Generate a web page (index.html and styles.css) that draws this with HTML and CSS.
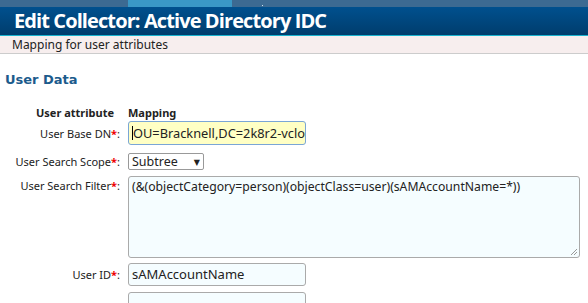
FILE: index.html
```html
<!DOCTYPE html>
<html>
<head>
<meta charset="utf-8">
<link rel="stylesheet" href="styles.css">
</head>
<body>
<div class="topstrip"><div class="tab"></div><div class="dot"></div></div>
<div class="titlebar"><h1>Edit Collector: Active Directory IDC</h1></div>
<div class="subbar">Mapping for user attributes</div>
<h2 class="section">User Data</h2>
<div class="form">
  <div class="row head">
    <div class="label">User attribute</div>
    <div class="field">Mapping</div>
  </div>
  <div class="row mid r1">
    <div class="label">User Base DN<span class="req">*</span>:</div>
    <div class="field"><div class="input focus"><span class="caret"></span>OU=Bracknell,DC=2k8r2-vcloud,DC=local</div></div>
  </div>
  <div class="row mid r2">
    <div class="label">User Search Scope<span class="req">*</span>:</div>
    <div class="field"><div class="select">Subtree<span class="arrow">▼</span></div></div>
  </div>
  <div class="row top r3">
    <div class="label lt">User Search Filter<span class="req">*</span>:</div>
    <div class="field"><div class="textarea">(&amp;(objectCategory=person)(objectClass=user)(sAMAccountName=*))<svg class="grip" width="8" height="8" viewBox="0 0 8 8"><path d="M7 1L1 7M7 4L4 7" stroke="#999" stroke-width="1"/></svg></div></div>
  </div>
  <div class="row mid">
    <div class="label">User ID<span class="req">*</span>:</div>
    <div class="field"><div class="input">sAMAccountName</div></div>
  </div>
  <div class="row mid">
    <div class="label"></div>
    <div class="field"><div class="input"></div></div>
  </div>
</div>
</body>
</html>
```
FILE: styles.css
```css
html, body { margin: 0; padding: 0; background: #fff; overflow: hidden; }
body { width: 588px; height: 303px; font-family: "Noto Sans", "DejaVu Sans", sans-serif; color: #222; }
.topstrip { height: 7px; background: #3c6a92; position: relative; }
.topstrip .tab { position: absolute; left: 128px; top: 0; width: 104px; height: 7px; background: #3a98c6; }
.topstrip .dot { position: absolute; left: 262px; top: 5px; width: 1px; height: 1px; background: #cfe3ee; }
.titlebar { height: 28px; background: linear-gradient(#00508e, #003d6d); border-bottom: 1px solid #19b3cf; display: flex; align-items: center; }
.titlebar h1 { margin: 0 0 0 14px; font-family: "Open Sans", sans-serif; font-weight: 700; font-size: 20px; color: #fff; letter-spacing: -0.9px; line-height: 28px; }
.subbar { height: 17px; background: #f7eeee; border-bottom: 1px solid #cccccc; font-size: 12px; line-height: 17px; padding-left: 12px; color: #222; }
.section { margin: 18px 0 0 5px; font-family: "DejaVu Sans", sans-serif; font-weight: 700; font-size: 13px; color: #1c5b8c; line-height: 16px; }
.form { margin-top: 18px; display: flex; flex-direction: column; }
.row { display: flex; gap: 8px; margin-bottom: 6px; }
.row.mid { align-items: center; }
.row.head { margin-bottom: 1px; }
.row.r1 { margin-bottom: 8px; }
.row.r2 { margin-bottom: 6px; }
.row.r3 { margin-bottom: 5px; }
.label { width: 120px; text-align: right; font-size: 11px; color: #222; flex: none; }
.head .label, .head .field { font-weight: 700; font-size: 11px; line-height: 14px; }
.head .label { text-align: right; padding-right: 6px; width: 114px; }
.lt { padding-top: 2px; }
.req { color: #e00; font-weight: 700; }
.field { flex: none; }
.input { width: 170px; height: 21px; border: 1px solid #aaa; border-radius: 3px; background: #f5fdff; font-size: 13px; line-height: 21px; padding: 0 3px; white-space: nowrap; overflow: hidden; box-sizing: content-box; }
.input.focus { background: #ffffc4; border-color: #7aa6d6; height: 22px; line-height: 22px; font-size: 12.8px; }
.caret { display: inline-block; width: 1px; height: 14px; background: #000; vertical-align: -2px; }
.select { width: 68px; height: 15px; border: 1px solid #999; border-radius: 2px; background: #fff; font-size: 12.5px; line-height: 15px; padding: 0 3px; display: flex; justify-content: space-between; }
.select .arrow { font-size: 8px; line-height: 15px; }
.textarea { width: 444px; height: 76px; border: 1px solid #aaa; border-radius: 3px; background: #f5fdff; font-size: 12.2px; line-height: 16px; padding: 2px 3px; position: relative; }
.grip { position: absolute; right: 1px; bottom: 1px; }
```
